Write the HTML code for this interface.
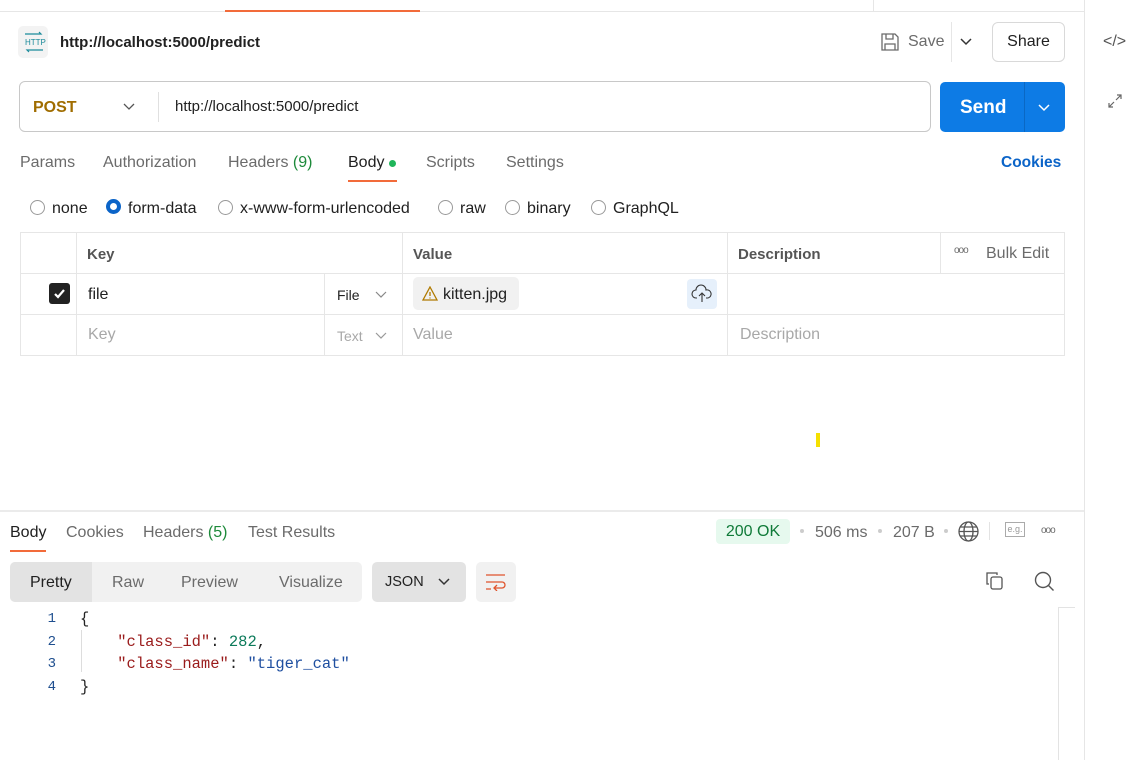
<!DOCTYPE html>
<html><head><meta charset="utf-8"><style>
*{box-sizing:border-box;margin:0;padding:0}
body{width:1133px;height:760px;overflow:hidden;background:#fff;font-family:"Liberation Sans",sans-serif;font-size:16px;color:#212121;position:relative}
.a{position:absolute;white-space:nowrap}
.g{color:#6b6b6b}
.mono{font-family:"Liberation Mono",monospace;font-size:15.5px}
</style></head><body>
<div class="a" style="left:0;top:11px;width:1084px;height:1px;background:#e6e6e6"></div>
<div class="a" style="left:225px;top:10px;width:195px;height:2px;background:#f26b3a"></div>
<div class="a" style="left:873px;top:0;width:1px;height:11px;background:#e6e6e6"></div>
<div class="a" style="left:1084px;top:0;width:1px;height:760px;background:#e6e6e6"></div>
<!-- header -->
<div class="a" style="left:18px;top:26px;width:30px;height:32px;background:#f3f3f3;border-radius:5px"></div>
<svg class="a" style="left:22px;top:31px" width="24" height="22" viewBox="0 0 24 22"><path d="M3 3h16l-2-2M21 19H5l2 2" stroke="#1a8a9a" fill="none" stroke-width="1.2"/><text x="3" y="14" font-size="8" fill="#1a8a9a" font-family="Liberation Sans">HTTP</text></svg>
<div class="a" style="left:60px;top:34px;font-weight:bold;font-size:15px">http://localhost:5000/predict</div>
<svg class="a" style="left:880px;top:32px" width="20" height="20" viewBox="0 0 20 20" fill="none" stroke="#6b6b6b" stroke-width="1.3"><path d="M2 2h13l3 3v13H2z"/><path d="M6 2v5h7V2M5 18v-6h10v6"/></svg>
<div class="a g" style="left:908px;top:33px">Save</div>
<div class="a" style="left:951px;top:22px;width:1px;height:40px;background:#e6e6e6"></div>
<svg class="a" style="left:960px;top:37px" width="12" height="10"><path d="M1 2l5 5 5-5" stroke="#333" fill="none" stroke-width="1.5"/></svg>
<div class="a" style="left:992px;top:22px;width:73px;height:40px;border:1px solid #d9d9d9;border-radius:6px;text-align:center;line-height:38px">Share</div>
<div class="a" style="left:1103px;top:33px;color:#555;font-size:16px">&lt;/&gt;</div>
<svg class="a" style="left:1107px;top:93px" width="16" height="16" fill="none" stroke="#666" stroke-width="1.2"><path d="M9 7l5-5M10 2h4v4M7 9l-5 5M2 10v4h4"/></svg>
<!-- url bar -->
<div class="a" style="left:19px;top:81px;width:912px;height:51px;border:1px solid #c8c8c8;border-radius:6px"></div>
<div class="a" style="left:33px;top:99px;font-weight:bold;color:#a06d00;font-size:16px">POST</div>
<svg class="a" style="left:123px;top:103px" width="12" height="8"><path d="M1 1l5 5 5-5" stroke="#555" fill="none" stroke-width="1.3"/></svg>
<div class="a" style="left:158px;top:92px;width:1px;height:30px;background:#e0e0e0"></div>
<div class="a" style="left:175px;top:98px;font-size:15px">http://localhost:5000/predict</div>
<div class="a" style="left:940px;top:82px;width:125px;height:50px;background:#0d7be5;border-radius:5px"></div>
<div class="a" style="left:1024px;top:82px;width:1px;height:50px;background:#0a68c4"></div>
<div class="a" style="left:960px;top:97px;color:#fff;font-weight:bold;font-size:19px">Send</div>
<svg class="a" style="left:1038px;top:104px" width="12" height="8"><path d="M1 1l5 5 5-5" stroke="#fff" fill="none" stroke-width="1.5"/></svg>
<!-- tabs -->
<div class="a g" style="left:20px;top:154px">Params</div>
<div class="a g" style="left:103px;top:154px">Authorization</div>
<div class="a g" style="left:228px;top:154px">Headers <span style="color:#1d8a3a">(9)</span></div>
<div class="a" style="left:348px;top:154px">Body</div>
<div class="a" style="left:389px;top:160px;width:7px;height:7px;border-radius:50%;background:#1fb55a"></div>
<div class="a" style="left:348px;top:180px;width:49px;height:2px;background:#f26b3a"></div>
<div class="a g" style="left:426px;top:154px">Scripts</div>
<div class="a g" style="left:506px;top:154px">Settings</div>
<div class="a" style="left:1001px;top:154px;color:#0b64c8;font-weight:bold;font-size:15.5px">Cookies</div>
<!-- radios -->
<div class="a" style="left:30px;top:200px;width:15px;height:15px;border:1px solid #999;border-radius:50%"></div>
<div class="a" style="left:52px;top:200px">none</div>
<div class="a" style="left:106px;top:199px;width:15px;height:15px;border:4px solid #0b64c8;border-radius:50%"></div>
<div class="a" style="left:128px;top:200px">form-data</div>
<div class="a" style="left:218px;top:200px;width:15px;height:15px;border:1px solid #999;border-radius:50%"></div>
<div class="a" style="left:240px;top:200px">x-www-form-urlencoded</div>
<div class="a" style="left:438px;top:200px;width:15px;height:15px;border:1px solid #999;border-radius:50%"></div>
<div class="a" style="left:460px;top:200px">raw</div>
<div class="a" style="left:505px;top:200px;width:15px;height:15px;border:1px solid #999;border-radius:50%"></div>
<div class="a" style="left:527px;top:200px">binary</div>
<div class="a" style="left:591px;top:200px;width:15px;height:15px;border:1px solid #999;border-radius:50%"></div>
<div class="a" style="left:613px;top:200px">GraphQL</div>
<!-- table -->
<div class="a" style="left:20px;top:232px;width:1045px;height:124px;border:1px solid #e6e6e6"></div>
<div class="a" style="left:20px;top:273px;width:1045px;height:1px;background:#e6e6e6"></div>
<div class="a" style="left:20px;top:314px;width:1045px;height:1px;background:#e6e6e6"></div>
<div class="a" style="left:76px;top:232px;width:1px;height:124px;background:#e6e6e6"></div>
<div class="a" style="left:324px;top:273px;width:1px;height:83px;background:#e6e6e6"></div>
<div class="a" style="left:402px;top:232px;width:1px;height:124px;background:#e6e6e6"></div>
<div class="a" style="left:727px;top:232px;width:1px;height:124px;background:#e6e6e6"></div>
<div class="a" style="left:940px;top:232px;width:1px;height:41px;background:#e6e6e6"></div>
<div class="a" style="left:87px;top:246px;font-weight:bold;color:#555;font-size:15px">Key</div>
<div class="a" style="left:413px;top:246px;font-weight:bold;color:#555;font-size:15px">Value</div>
<div class="a" style="left:738px;top:246px;font-weight:bold;color:#555;font-size:15px">Description</div>
<div class="a g" style="left:954px;top:245px;font-size:10px;letter-spacing:-1px">ooo</div>
<div class="a g" style="left:986px;top:245px">Bulk Edit</div>
<div class="a" style="left:49px;top:283px;width:21px;height:21px;background:#222;border-radius:3px"></div>
<svg class="a" style="left:52px;top:286px" width="15" height="15"><path d="M3 8l3 3 6-7" stroke="#fff" fill="none" stroke-width="2.2"/></svg>
<div class="a" style="left:88px;top:286px">file</div>
<div class="a" style="left:337px;top:287px;font-size:14px">File</div>
<svg class="a" style="left:375px;top:291px" width="12" height="8"><path d="M1 1l5 5 5-5" stroke="#888" fill="none" stroke-width="1.2"/></svg>
<div class="a" style="left:413px;top:277px;width:106px;height:33px;background:#f1f1f1;border-radius:5px"></div>
<svg class="a" style="left:422px;top:286px" width="16" height="15"><path d="M8 1L15 14H1z" stroke="#b07a00" fill="none" stroke-width="1.3"/><path d="M8 6v4M8 11.5v1" stroke="#b07a00" stroke-width="1.3"/></svg>
<div class="a" style="left:443px;top:286px">kitten.jpg</div>
<div class="a" style="left:687px;top:279px;width:30px;height:30px;background:#e6f0fb;border-radius:4px"></div>
<svg class="a" style="left:691px;top:284px" width="22" height="20" fill="none" stroke="#333" stroke-width="1.1"><path d="M6 14H5a4 4 0 0 1 0-8 5 5 0 0 1 10 0 4 4 0 0 1 2 8h-2"/><path d="M11 18V10M8 12l3-3 3 3"/></svg>
<div class="a" style="left:88px;top:326px;color:#a8a8a8">Key</div>
<div class="a" style="left:337px;top:328px;font-size:14px;color:#a8a8a8">Text</div>
<svg class="a" style="left:375px;top:332px" width="12" height="8"><path d="M1 1l5 5 5-5" stroke="#999" fill="none" stroke-width="1.2"/></svg>
<div class="a" style="left:413px;top:326px;color:#a8a8a8">Value</div>
<div class="a" style="left:740px;top:326px;color:#a8a8a8">Description</div>
<div class="a" style="left:816px;top:433px;width:4px;height:14px;background:#f5e000"></div>
<!-- response -->
<div class="a" style="left:0;top:510px;width:1084px;height:2px;background:#ebebeb"></div>
<div class="a" style="left:10px;top:524px">Body</div>
<div class="a" style="left:10px;top:550px;width:36px;height:2px;background:#f26b3a"></div>
<div class="a g" style="left:66px;top:524px">Cookies</div>
<div class="a g" style="left:143px;top:524px">Headers <span style="color:#1d8a3a">(5)</span></div>
<div class="a g" style="left:248px;top:524px">Test Results</div>
<div class="a" style="left:716px;top:519px;width:74px;height:25px;background:#e6f9ee;border-radius:4px;color:#0f7a38;text-align:center;line-height:26px">200 OK</div>
<div class="a" style="left:800px;top:529px;width:4px;height:4px;border-radius:50%;background:#ccc"></div>
<div class="a g" style="left:815px;top:524px">506 ms</div>
<div class="a" style="left:878px;top:529px;width:4px;height:4px;border-radius:50%;background:#ccc"></div>
<div class="a g" style="left:893px;top:524px">207 B</div>
<div class="a" style="left:944px;top:529px;width:4px;height:4px;border-radius:50%;background:#ccc"></div>
<svg class="a" style="left:958px;top:521px" width="21" height="21" fill="none" stroke="#555" stroke-width="1.3"><circle cx="10.5" cy="10.5" r="9.5"/><ellipse cx="10.5" cy="10.5" rx="4.5" ry="9.5"/><path d="M1 10.5h19M2.5 6h16M2.5 15h16"/></svg>
<div class="a" style="left:989px;top:522px;width:1px;height:18px;background:#e3e3e3"></div>
<div class="a" style="left:1005px;top:522px;width:20px;height:15px;border:1px solid #aaa;font-size:9px;color:#999;text-align:center;line-height:12px">e.g.</div>
<div class="a g" style="left:1041px;top:525px;font-size:10px;letter-spacing:-1px">ooo</div>
<div class="a" style="left:10px;top:562px;width:352px;height:40px;background:#f1f1f1;border-radius:5px"></div>
<div class="a" style="left:10px;top:562px;width:82px;height:40px;background:#e3e3e3;border-radius:5px 0 0 5px"></div>
<div class="a" style="left:30px;top:574px">Pretty</div>
<div class="a g" style="left:112px;top:574px">Raw</div>
<div class="a g" style="left:181px;top:574px">Preview</div>
<div class="a g" style="left:279px;top:574px">Visualize</div>
<div class="a" style="left:372px;top:562px;width:94px;height:40px;background:#e3e3e3;border-radius:5px"></div>
<div class="a" style="left:385px;top:574px;font-size:14.5px">JSON</div>
<svg class="a" style="left:438px;top:578px" width="12" height="8"><path d="M1 1l5 5 5-5" stroke="#333" fill="none" stroke-width="1.5"/></svg>
<div class="a" style="left:476px;top:562px;width:40px;height:40px;background:#f1f1f1;border-radius:5px"></div>
<svg class="a" style="left:485px;top:573px" width="22" height="18" fill="none" stroke="#e0542c" stroke-width="1.3"><path d="M1 2h19M1 9h16a3 3 0 0 1 0 6h-7M12 12l-3 3 3 3M1 16h5"/></svg>
<svg class="a" style="left:985px;top:571px" width="20" height="20" fill="none" stroke="#555" stroke-width="1.3"><path d="M4 13H2V2h10v2"/><rect x="6" y="6" width="11" height="12" rx="2"/></svg>
<svg class="a" style="left:1034px;top:571px" width="22" height="22" fill="none" stroke="#555" stroke-width="1.4"><circle cx="9" cy="9" r="7.5"/><path d="M14.5 14.5l5 5"/></svg>
<div class="a" style="left:1058px;top:607px;width:1px;height:153px;background:#e3e3e3"></div>
<div class="a" style="left:1058px;top:607px;width:17px;height:1px;background:#e3e3e3"></div>
<div class="a" style="left:81px;top:630px;width:1px;height:42px;background:#ddd"></div>
<div class="a mono" style="left:46px;top:608px;color:#1f4f8f;line-height:22.5px;text-align:right;width:10px;font-size:14px">1<br>2<br>3<br>4</div>
<div class="a mono" style="left:80px;top:608px;line-height:22.5px;color:#222">{<br>&nbsp;&nbsp;&nbsp;&nbsp;<span style="color:#9a1b1b">"class_id"</span>: <span style="color:#0c7a5a">282</span>,<br>&nbsp;&nbsp;&nbsp;&nbsp;<span style="color:#9a1b1b">"class_name"</span>: <span style="color:#1f4fa0">"tiger_cat"</span><br>}</div>
</body></html>
